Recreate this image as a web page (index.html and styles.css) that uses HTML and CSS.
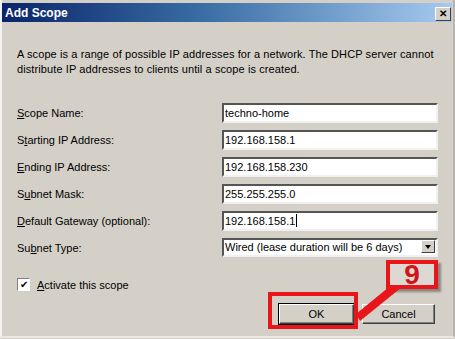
FILE: index.html
```html
<!DOCTYPE html>
<html>

<head>
    <meta charset="utf-8" />
    <title>Add Scope</title>
    <link rel="stylesheet" href="styles.css">
</head>

<body>
    <div class="dialog">
        <div class="titlebar">
            <span class="titlebar-text">Add Scope</span>
            <span class="titlebar-close">&#x2715;</span>
        </div>
        <div class="content">
            <p class="intro">A scope is a range of possible IP addresses for a network. The DHCP server cannot<br />distribute IP addresses to clients until a scope is created.</p>
            <div class="form">
                <label class="form-label"><u>S</u>cope Name:</label>
                <div class="field">techno-home</div>
                <label class="form-label">S<u>t</u>arting IP Address:</label>
                <div class="field">192.168.158.1</div>
                <label class="form-label"><u>E</u>nding IP Address:</label>
                <div class="field">192.168.158.230</div>
                <label class="form-label">S<u>u</u>bnet Mask:</label>
                <div class="field">255.255.255.0</div>
                <label class="form-label"><u>D</u>efault Gateway (optional):</label>
                <div class="field">192.168.158.1<span class="caret"></span></div>
                <label class="form-label">Su<u>b</u>net Type:</label>
                <div class="field select">
                    <span class="select-text">Wired (lease duration will be 6 days)</span>
                    <span class="select-arrow"></span>
                </div>
            </div>
            <div class="activate">
                <span class="checkbox">&#x2714;</span>
                <span><u>A</u>ctivate this scope</span>
            </div>
            <div class="buttons">
                <div class="btn btn-default">OK</div>
                <div class="btn">Cancel</div>
            </div>
        </div>

        <!-- tutorial annotation drawn over the dialog -->
        <div class="mark-ok"></div>
        <div class="mark-step">9</div>
        <svg class="mark-pointer" width="455" height="339">
            <polygon points="389,287 402,287 360,321 356,314" fill="#e8151b" />
        </svg>
    </div>
</body>

</html>
```

FILE: styles.css
```css
body,
html {
    margin: 0;
    width: 100%;
    height: 100%;
    overflow: hidden;
    background-color: #d4d0c8;
}

body {
    font-family: "Liberation Sans", Arial, sans-serif;
    font-size: 11px;
    color: #000;
}

.dialog {
    position: relative;
    width: 451px;
    height: 333px;
    border-left: 2px solid #f4f2ee;
    border-bottom: 2px solid #ebe9e3;
    border-right: 2px solid #b8b4ac;
    padding-top: 3px;
    background-color: #d4d0c8;
}

.titlebar {
    height: 19px;
    margin-right: 1px;
    display: flex;
    align-items: center;
    justify-content: space-between;
    padding: 0 1px 0 3px;
    background: linear-gradient(to right, #0a246a, #3a6ea5 45%, #a6caf0);
}

.titlebar-text {
    color: #fff;
    font-weight: bold;
    font-size: 12px;
}

.titlebar-close {
    align-self: flex-end;
    margin-bottom: 1px;
    width: 14px;
    height: 12px;
    line-height: 12px;
    text-align: center;
    font-size: 10px;
    font-weight: bold;
    background-color: #d4d0c8;
    border: 1px solid;
    border-color: #fff #404040 #404040 #fff;
}

.content {
    padding: 0 18px 0 15px;
}

.intro {
    margin: 25px 0 0 0;
    line-height: 15px;
    letter-spacing: 0.1px;
    white-space: nowrap;
}

.form {
    display: grid;
    grid-template-columns: 205px 216px;
    row-gap: 7px;
    margin-top: 26px;
}

.form-label {
    display: flex;
    align-items: center;
}

.field {
    height: 16px;
    line-height: 16px;
    padding-left: 1px;
    background-color: #fff;
    border: 2px solid;
    border-color: #555 #f0f0f0 #f0f0f0 #555;
    white-space: nowrap;
}

.caret {
    display: inline-block;
    width: 1px;
    height: 13px;
    margin-left: 1px;
    background-color: #000;
    vertical-align: -2px;
}

.select {
    height: 15px;
    line-height: 15px;
    display: flex;
    justify-content: space-between;
    padding-right: 0;
}

.select-arrow {
    position: relative;
    width: 12px;
    height: 11px;
    margin: 0 1px 0 0;
    background-color: #d4d0c8;
    border: 1px solid;
    border-color: #fff #404040 #404040 #fff;
}

.select-arrow::after {
    content: "";
    position: absolute;
    left: 3px;
    top: 4px;
    border-left: 3px solid transparent;
    border-right: 3px solid transparent;
    border-top: 4px solid #000;
}

.activate {
    display: flex;
    align-items: center;
    gap: 7px;
    margin-top: 21px;
}

.checkbox {
    width: 11px;
    height: 11px;
    line-height: 11px;
    font-size: 10px;
    text-align: center;
    background-color: #fff;
    border: 1px solid;
    border-color: #808080 #fff #fff #808080;
}

.buttons {
    display: flex;
    justify-content: flex-end;
    gap: 8px;
    margin-top: 13px;
}

.btn {
    width: 71px;
    height: 18px;
    line-height: 18px;
    text-align: center;
    border: 1px solid;
    border-color: #fff #404040 #404040 #fff;
    box-shadow: inset -1px -1px #808080;
}

.btn-default {
    width: 73px;
    outline: 1px solid #000;
}

.mark-ok {
    position: absolute;
    left: 266px;
    top: 292px;
    width: 82px;
    height: 29px;
    border: 4px solid #e8151b;
}

.mark-step {
    position: absolute;
    left: 384px;
    top: 260px;
    width: 44px;
    height: 21px;
    line-height: 22px;
    text-align: center;
    border: 4px solid #e8151b;
    background-color: #dcd9d2;
    box-shadow: 3px 3px 2px #8a8780;
    color: #d0141a;
    font-size: 28px;
    font-weight: bold;
}

.mark-pointer {
    position: absolute;
    left: -2px;
    top: 0;
}
```
